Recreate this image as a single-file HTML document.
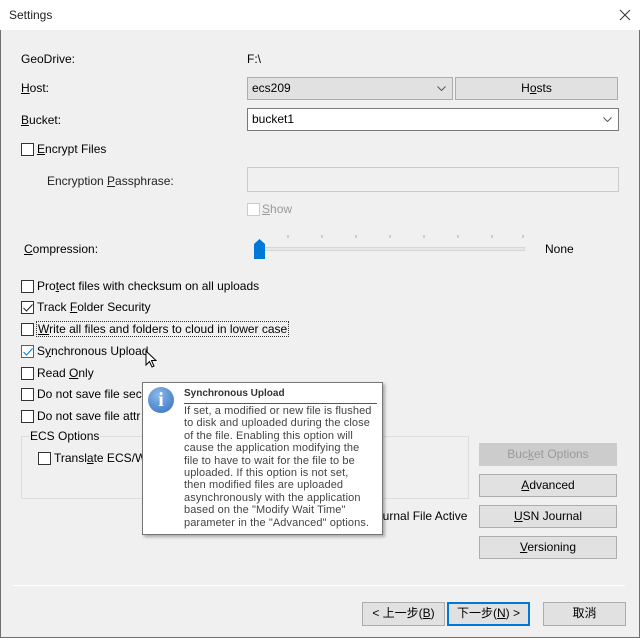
<!DOCTYPE html>
<html><head><meta charset="utf-8"><style>
*{box-sizing:border-box;margin:0;padding:0}
body{width:640px;height:638px;background:#f0f0f0;font-family:"Liberation Sans","Noto Sans CJK TC",sans-serif;font-size:12px;color:#000;position:relative;overflow:hidden}
.a{position:absolute;white-space:nowrap;line-height:14px}
.win{position:absolute;left:0;top:0;width:640px;height:638px;border:1px solid #707070;border-top:none}
.title{position:absolute;left:0;top:0;width:640px;height:30px;background:#fff}
.cb{position:absolute;width:13px;height:13px;border:1px solid #333;background:#fff}
.btn{position:absolute;background:#e1e1e1;border:1px solid #adadad;text-align:center;line-height:20px}
u{text-decoration:underline}
.chev{position:absolute;right:6px;top:8px}
</style></head><body>
<div class="win"></div>
<div class="title"></div>
<div class="a" style="left:9px;top:8px;color:#222">Settings</div>
<svg style="position:absolute;left:619px;top:9px" width="12" height="12"><path d="M1 1L11 11M11 1L1 11" stroke="#333" stroke-width="1"/></svg>

<div class="a" style="left:21px;top:52px">GeoDrive:</div>
<div class="a" style="left:247px;top:52px">F:\</div>
<div class="a" style="left:21px;top:81px"><u>H</u>ost:</div>
<div class="btn" style="left:247px;top:77px;width:206px;height:23px;text-align:left;padding-left:4px">ecs209<svg class="chev" width="9" height="5"><path d="M0.5 0.5L4.5 4.5L8.5 0.5" stroke="#555" fill="none"/></svg></div>
<div class="btn" style="left:455px;top:77px;width:163px;height:23px">H<u>o</u>sts</div>
<div class="a" style="left:21px;top:113px"><u>B</u>ucket:</div>
<div style="position:absolute;left:247px;top:108px;width:372px;height:23px;background:#fff;border:1px solid #7a7a7a;padding-left:4px;line-height:20px">bucket1<svg class="chev" width="9" height="5"><path d="M0.5 0.5L4.5 4.5L8.5 0.5" stroke="#555" fill="none"/></svg></div>
<div class="cb" style="left:21px;top:143px"></div>
<div class="a" style="left:37px;top:142px"><u>E</u>ncrypt Files</div>
<div class="a" style="left:47px;top:174px;color:#222">Encryption <u>P</u>assphrase:</div>
<div style="position:absolute;left:247px;top:167px;width:372px;height:25px;background:#f0f0f0;border:1px solid #ccc"></div>
<div class="cb" style="left:247px;top:203px;border-color:#ccc"></div>
<div class="a" style="left:262px;top:202px;color:#999"><u>S</u>how</div>

<div class="a" style="left:24px;top:242px"><u>C</u>ompression:</div>
<div style="position:absolute;left:255px;top:247px;width:270px;height:4px;background:#e7e7e7;border:1px solid #d6d6d6"></div>
<div style="position:absolute;left:254px;top:239px;width:11px;height:20px;background:#0078d7;clip-path:polygon(50% 0,100% 25%,100% 100%,0 100%,0 25%)"></div>
<div class="a" style="left:545px;top:242px">None</div>
<svg style="position:absolute;left:254px;top:235px" width="280" height="6"><g stroke="#aaa"><line x1="34" y1="0" x2="34" y2="3"/><line x1="68" y1="0" x2="68" y2="3"/><line x1="102" y1="0" x2="102" y2="3"/><line x1="136" y1="0" x2="136" y2="3"/><line x1="170" y1="0" x2="170" y2="3"/><line x1="204" y1="0" x2="204" y2="3"/><line x1="238" y1="0" x2="238" y2="3"/><line x1="269" y1="0" x2="269" y2="3"/></g></svg>

<div class="cb" style="left:21px;top:280px"></div><div class="a" style="left:37px;top:279px">Pro<u>t</u>ect files with checksum on all uploads</div>
<div class="cb" style="left:21px;top:301px"></div><svg style="position:absolute;left:23px;top:304px" width="10" height="8"><path d="M0.5 4L3.5 7L9.5 0.5" stroke="#222" fill="none"/></svg><div class="a" style="left:37px;top:300px">Track <u>F</u>older Security</div>
<div class="cb" style="left:21px;top:323px"></div><div class="a" style="left:36px;top:321px;border:1px dotted #333;padding:0 1px"><u>W</u>rite all files and folders to cloud in lower case</div>
<div class="cb" style="left:21px;top:345px;border-color:#0078d7"></div><svg style="position:absolute;left:23px;top:348px" width="10" height="8"><path d="M0.5 4L3.5 7L9.5 0.5" stroke="#0078d7" fill="none"/></svg><div class="a" style="left:37px;top:344px">S<u>y</u>nchronous Upload</div>
<svg style="position:absolute;left:145px;top:350px" width="12" height="20"><path d="M1 1L1 15L4.5 11.5L7 17L9 16L6.5 10.5L11 10.5Z" fill="#fff" stroke="#000"/></svg>
<div class="cb" style="left:21px;top:367px"></div><div class="a" style="left:37px;top:366px">Read <u>O</u>nly</div>
<div class="cb" style="left:21px;top:388px"></div><div class="a" style="left:37px;top:387px">Do not save file sec</div>
<div class="cb" style="left:21px;top:410px"></div><div class="a" style="left:37px;top:409px">Do not save file attr</div>

<div style="position:absolute;left:21px;top:436px;width:448px;height:63px;border:1px solid #dcdcdc"></div>
<div class="a" style="left:29px;top:429px;background:#f0f0f0;padding:0 1px">ECS Options</div>
<div class="cb" style="left:38px;top:452px"></div><div class="a" style="left:54px;top:451px">Transl<u>a</u>te ECS/W</div>
<div class="a" style="left:376px;top:509px">ournal File Active</div>

<div class="btn" style="left:479px;top:443px;width:138px;height:23px;color:#999;background:#ccc;border-color:#ccc">Buc<u>k</u>et Options</div>
<div class="btn" style="left:479px;top:474px;width:138px;height:23px"><u>A</u>dvanced</div>
<div class="btn" style="left:479px;top:505px;width:138px;height:23px"><u>U</u>SN Journal</div>
<div class="btn" style="left:479px;top:536px;width:138px;height:23px"><u>V</u>ersioning</div>

<div style="position:absolute;left:13px;top:585px;width:612px;height:1px;background:#a0a0a0;border-bottom:1px solid #fff"></div>
<div class="btn" style="left:362px;top:602px;width:83px;height:24px">&lt; 上一步(<u>B</u>)</div>
<div class="btn" style="left:447px;top:602px;width:83px;height:24px;border:2px solid #0078d7;line-height:19px">下一步(<u>N</u>) &gt;</div>
<div class="btn" style="left:543px;top:602px;width:83px;height:24px">取消</div>

<div style="position:absolute;left:142px;top:382px;width:241px;height:153px;background:#fff;border:1px solid #767676;box-shadow:2px 2px 3px rgba(0,0,0,.3)">
<div style="position:absolute;left:5px;top:4px;width:26px;height:26px;border-radius:50%;background:radial-gradient(circle at 40% 30%,#8bb8ea,#2f6fbf);color:#fff;text-align:center;font:bold 20px/26px 'Liberation Serif',serif">i</div>
<div class="a" style="left:41px;top:4px;font-size:10px;font-weight:bold;color:#333">Synchronous Upload</div>
<div style="position:absolute;left:41px;top:20px;width:193px;height:1px;background:#555"></div>
<div style="position:absolute;left:41px;top:22px;white-space:nowrap;font-size:11px;line-height:12.4px;color:#444;letter-spacing:0.1px">If set, a modified or new file is flushed<br>to disk and uploaded during the close<br>of the file. Enabling this option will<br>cause the application modifying the<br>file to have to wait for the file to be<br>uploaded. If this option is not set,<br>then modified files are uploaded<br>asynchronously with the application<br>based on the "Modify Wait Time"<br>parameter in the "Advanced" options.</div>
</div>
</body></html>
